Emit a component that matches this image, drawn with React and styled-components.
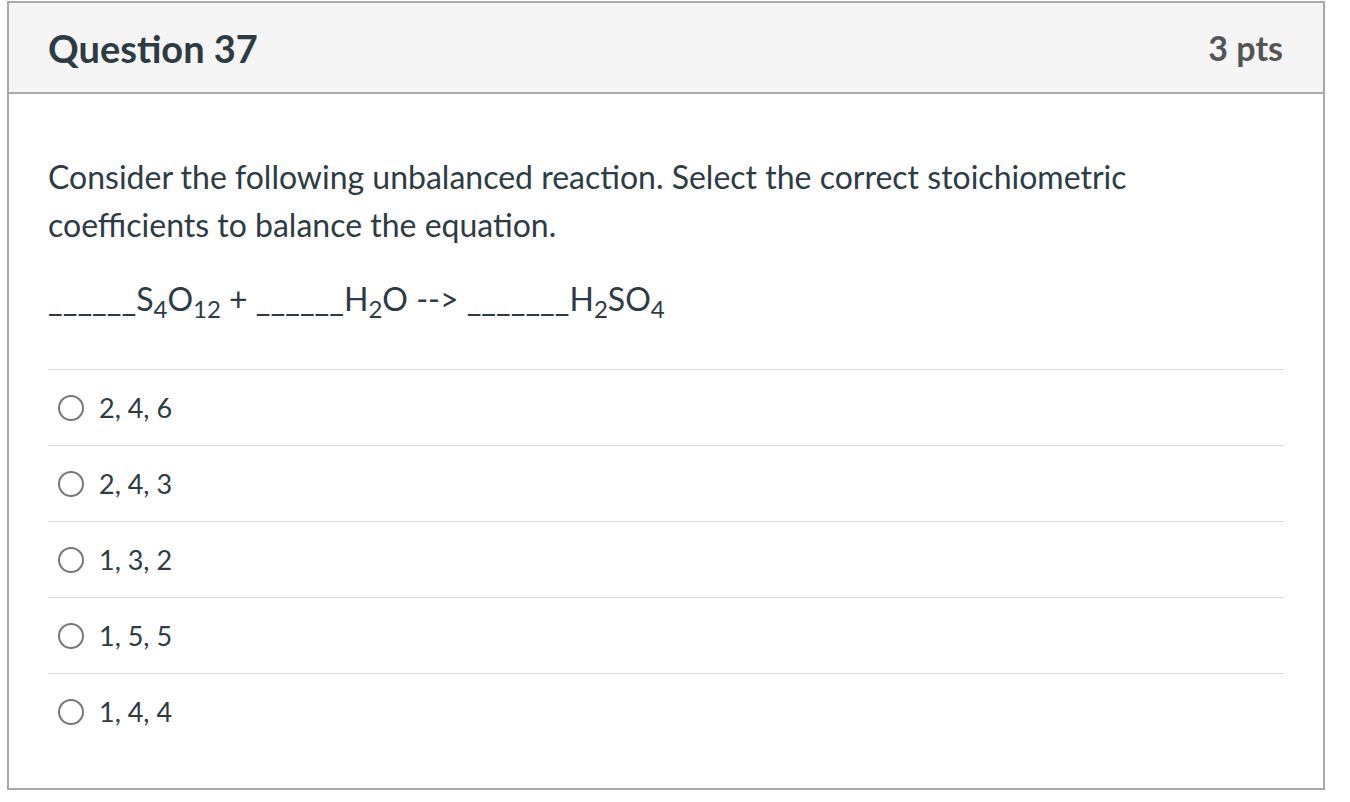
import styled, { createGlobalStyle } from 'styled-components'

const Global = createGlobalStyle`
  body {
    margin: 0;
    background: #fff;
    font-family: Lato, "Noto Sans", sans-serif;
    color: #2d3b45;
  }
`

const Card = styled.div`
  margin: 1px 0 0 7px;
  width: 1318px;
  height: 789px;
  box-sizing: border-box;
  border: 2px solid #a9a9a9;
`

const Header = styled.div`
  height: 91px;
  box-sizing: border-box;
  background: #f5f5f5;
  border-bottom: 2px solid #a9a9a9;
  padding: 0 40px 0 39px;
  display: flex;
  align-items: center;
  justify-content: space-between;
`

const Title = styled.h2`
  margin: 0;
  font-size: 38px;
  font-weight: 700;
  color: #2d3b45;
`

const Points = styled.span`
  font-size: 34px;
  font-weight: 700;
  color: #555;
`

const Body = styled.div`
  padding: 59px 39px 0 39px;
`

const Text = styled.p`
  margin: 0 0 26px;
  font-size: 32px;
  line-height: 48px;
`

const Sub = styled.sub`
  font-size: 24px;
  vertical-align: -7px;
  line-height: 0;
`

const Answers = styled.div`
  margin-top: 46px;
`

const Answer = styled.label`
  display: flex;
  align-items: center;
  gap: 15px;
  height: 75px;
  border-top: 1px solid #dadada;
  padding-left: 10px;
  font-size: 27px;
`

const Radio = styled.span`
  width: 26px;
  height: 26px;
  box-sizing: border-box;
  border: 2px solid #777;
  border-radius: 50%;
  flex: none;
`

const options = ['2, 4, 6', '2, 4, 3', '1, 3, 2', '1, 5, 5', '1, 4, 4']

export default function App() {
  return (
    <>
      <Global />
      <Card>
        <Header>
          <Title>Question 37</Title>
          <Points>3 pts</Points>
        </Header>
        <Body>
          <Text>
            Consider the following unbalanced reaction. Select the correct stoichiometric
            <br />
            coefficients to balance the equation.
          </Text>
          <Text>
            ______S<Sub>4</Sub>O<Sub>12</Sub> + ______H<Sub>2</Sub>O --&gt; _______H<Sub>2</Sub>SO<Sub>4</Sub>
          </Text>
          <Answers>
            {options.map((o) => (
              <Answer key={o}>
                <Radio />
                {o}
              </Answer>
            ))}
          </Answers>
        </Body>
      </Card>
    </>
  )
}
